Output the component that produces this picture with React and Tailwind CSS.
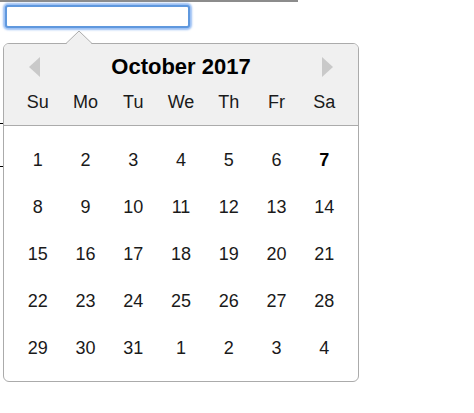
import React from "react";

const DAYS = ["Su", "Mo", "Tu", "We", "Th", "Fr", "Sa"];

const weeks = [
  [1, 2, 3, 4, 5, 6, 7],
  [8, 9, 10, 11, 12, 13, 14],
  [15, 16, 17, 18, 19, 20, 21],
  [22, 23, 24, 25, 26, 27, 28],
  [29, 30, 31, 1, 2, 3, 4],
];

const Arrow = ({ dir }) => (
  <svg width="11" height="20" viewBox="0 0 11 20" className="block">
    {dir === "left" ? (
      <polygon points="11,0 11,20 0,10" fill="#c9c9c9" />
    ) : (
      <polygon points="0,0 0,20 11,10" fill="#c9c9c9" />
    )}
  </svg>
);

const App = () => {
  return (
    <div
      className="relative w-[474px] h-[413px] bg-white overflow-hidden"
      style={{ fontFamily: '"Liberation Sans", Arial, sans-serif' }}
    >
      <div className="w-[298px] h-[2px] bg-[#8c8c8c]" />
      <input
        type="text"
        className="block ml-[5px] mt-[3px] w-[185px] h-[23px] bg-white border-2 border-[#5f98de] rounded-[3px] outline-none shadow-[0_0_2px_2px_rgba(120,170,240,0.75)]"
      />

      {/* bits of the page peeking out behind the popup */}
      <div className="absolute left-0 top-[123px] w-[7px] h-px bg-black" />
      <div className="absolute left-0 top-[166px] w-[4px] h-px bg-black" />

      {/* popup pointer */}
      <svg
        width="26"
        height="14"
        viewBox="0 0 26 14"
        className="absolute left-[66px] top-[30px] z-20"
      >
        <polygon points="0,14 13,1 26,14" fill="#f0f0f0" />
        <polyline points="0,13.5 13,1 26,13.5" fill="none" stroke="#ababab" strokeWidth="1" />
      </svg>

      <div className="absolute left-[3px] top-[43px] z-10 w-[356px] h-[339px] border border-[#ababab] rounded-[6px] bg-white overflow-hidden text-[#1a1a1a]">
        <div className="bg-[#f0f0f0] border-b border-[#ababab] px-[10px] pb-[11px]">
          <div className="h-[46px] flex items-center justify-between px-[15px]">
            <Arrow dir="left" />
            <div className="text-[22px] font-bold text-black leading-none">October 2017</div>
            <Arrow dir="right" />
          </div>
          <div className="grid grid-cols-7 h-[24px] items-center text-center text-[18px] leading-none">
            {DAYS.map((d) => (
              <div key={d}>{d}</div>
            ))}
          </div>
        </div>
        <div className="px-[10px] py-[10px]">
          {weeks.map((week, i) => (
            <div key={i} className="grid grid-cols-7 h-[47px] items-center text-center text-[18px] leading-none">
              {week.map((n, j) => (
                <div key={j} className={i === 0 && n === 7 ? "font-bold text-black" : ""}>
                  {n}
                </div>
              ))}
            </div>
          ))}
        </div>
      </div>
    </div>
  );
};

export default App;
